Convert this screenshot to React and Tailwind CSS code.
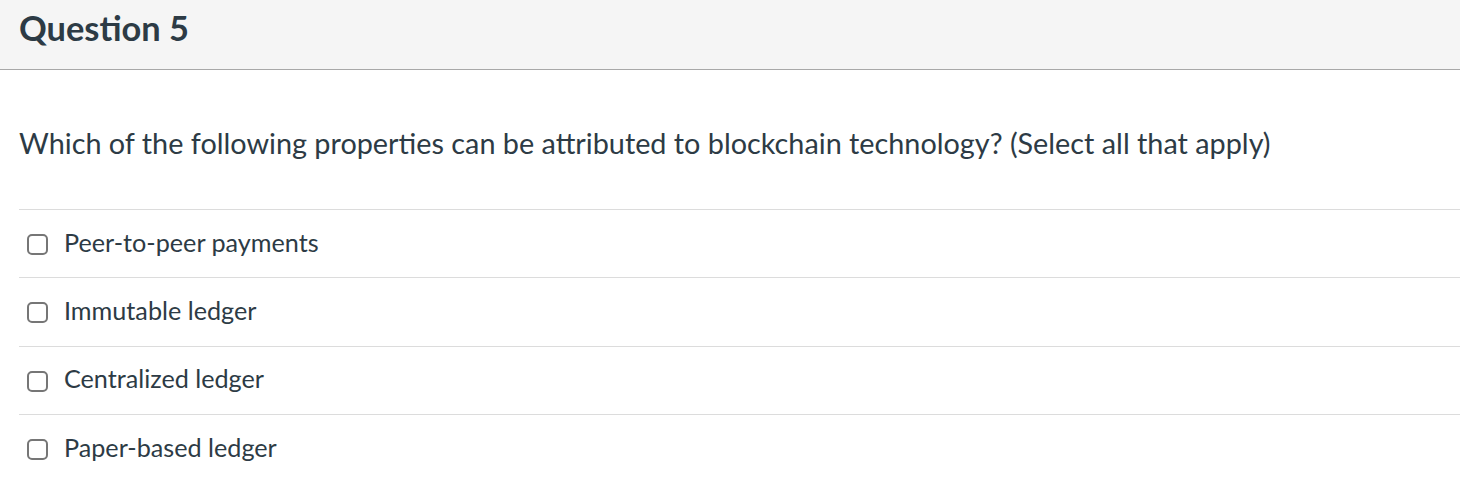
const options = [
  'Peer-to-peer payments',
  'Immutable ledger',
  'Centralized ledger',
  'Paper-based ledger',
]

export default function App() {
  return (
    <div className="min-h-screen bg-white text-[#2d3b45]" style={{ fontFamily: 'Lato, "Noto Sans", sans-serif' }}>
      <div className="flex h-[70px] items-start border-b border-[#a8a8a8] bg-[#f5f5f5] px-[19px] pt-[11px]">
        <h2 className="text-[34.4px] font-bold leading-none">Question 5</h2>
      </div>

      <div className="pl-[19px]">
        <p className="mt-[53px] mb-[46px] text-[28.8px] leading-[40px]">
          Which of the following properties can be attributed to blockchain technology? (Select all that apply)
        </p>

        <div>
          {options.map((label) => (
            <label
              key={label}
              className="flex h-[68.33px] items-center border-t border-[#dcdcdc] pl-[8px]"
            >
              <span className="mt-[2px] h-[21px] w-[21px] shrink-0 rounded-[5px] border-2 border-[#767676] bg-white" />
              <span className="ml-[16px] pb-[3px] text-[25.2px] leading-none">{label}</span>
            </label>
          ))}
        </div>
      </div>
    </div>
  )
}
